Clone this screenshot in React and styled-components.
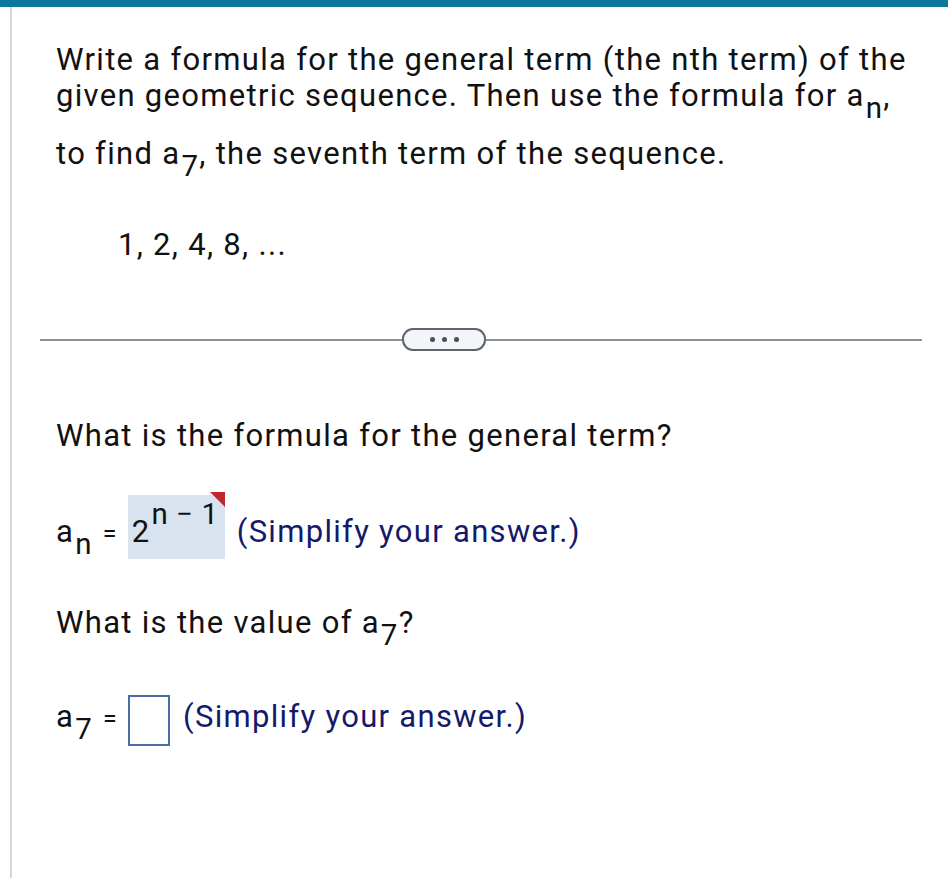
import React from "react";
import styled, { createGlobalStyle } from "styled-components";

const Global = createGlobalStyle`
  html, body { margin: 0; padding: 0; background: #fff; }
  body { font-family: Roboto, "Noto Sans", sans-serif; color: #111; }
`;

const Page = styled.div`
  width: 948px;
  height: 878px;
  display: flex;
  flex-direction: column;
  overflow: hidden;
`;

const TopBar = styled.div`
  height: 7px;
  background: #0b779c;
  flex: none;
`;

const Body = styled.div`
  flex: 1;
  display: flex;
`;

const Rail = styled.div`
  width: 2px;
  margin-left: 10px;
  background: #d2d8df;
  flex: none;
`;

const Content = styled.div`
  flex: 1;
  display: flex;
  flex-direction: column;
  padding: 35px 0 0 28px;
  font-size: 31px;
  letter-spacing: 1.3px;
`;

const Para = styled.p`
  margin: 0;
  line-height: 36px;
  padding-left: ${(p) => p.indent || 16}px;
  margin-top: ${(p) => p.mt || 0}px;
  white-space: nowrap;
`;

const Sub = styled.sub`
  font-size: 0.95em;
  vertical-align: -0.4em;
  line-height: 0;
  margin-left: 1px;
`;

const Sep = styled.div`
  display: flex;
  align-items: center;
  margin-top: 65px;
  margin-right: 26px;
`;

const SepLine = styled.div`
  flex: ${(p) => (p.w ? "none" : 1)};
  width: ${(p) => (p.w ? `${p.w}px` : "auto")};
  height: 2px;
  background: #8b929a;
`;

const Pill = styled.div`
  width: 80px;
  height: 19px;
  border: 2px solid #5d646d;
  border-radius: 11px;
  background: #f3f5f8;
  display: flex;
  align-items: center;
  justify-content: center;
  gap: 7px;
`;

const Dot = styled.span`
  width: 5px;
  height: 5px;
  border-radius: 50%;
  background: #4a4f56;
`;

const Row = styled.div`
  display: flex;
  align-items: baseline;
  padding-left: 16px;
  margin-top: ${(p) => p.mt || 0}px;
  line-height: 36px;
`;

const Var = styled.span`
  display: inline-block;
`;

const Eq = styled.span`
  margin: 0 ${(p) => p.mr || 10}px 0 ${(p) => p.ml || 10}px;
  font-size: 25px;
`;

const Answer = styled.span`
  position: relative;
  display: inline-block;
  background: #d9e2ef;
  height: 36px;
  padding: 19px 6px 9px 4px;
`;

const Corner = styled.span`
  position: absolute;
  top: -3px;
  right: 0;
  width: 0;
  height: 0;
  border-top: 15px solid #c0262c;
  border-left: 15px solid transparent;
`;

const Sup = styled.sup`
  font-size: 0.95em;
  vertical-align: 0.6em;
  line-height: 0;
  margin-left: 1px;
  letter-spacing: 0.6px;
  white-space: pre;
`;

const Hint = styled.span`
  color: #15196b;
  margin-left: ${(p) => p.ml || 12}px;
`;

const EmptyBox = styled.span`
  display: inline-block;
  width: 38px;
  height: 36px;
  padding: 2px 0 9px;
  border: 2px solid #4a6ea6;
  overflow: hidden;
`;

export default function App() {
  return (
    <Page>
      <Global />
      <TopBar />
      <Body>
        <Rail />
        <Content>
          <Para>
            Write a formula for the general term (the nth term) of the
            <br />
            given geometric sequence. Then use the formula for a<Sub>n</Sub>,
          </Para>
          <Para mt={22}>
            to find a<Sub>7</Sub>, the seventh term of the sequence.
          </Para>
          <Para indent={78} mt={55}>1, 2, 4, 8, ...</Para>
          <Sep>
            <SepLine w={362} />
            <Pill>
              <Dot />
              <Dot />
              <Dot />
            </Pill>
            <SepLine />
          </Sep>
          <Para mt={67}>What is the formula for the general term?</Para>
          <Row mt={41}>
            <Var>
              a<Sub>n</Sub>
            </Var>
            <Eq>=</Eq>
            <Answer>
              2<Sup>n − 1</Sup>
              <Corner />
            </Answer>
            <Hint ml={12}>(Simplify your answer.)</Hint>
          </Row>
          <Para mt={46}>
            What is the value of a<Sub>7</Sub>?
          </Para>
          <Row mt={54}>
            <Var>
              a<Sub>7</Sub>
            </Var>
            <Eq>=</Eq>
            <EmptyBox>{"\u00a0"}</EmptyBox>
            <Hint ml={13}>(Simplify your answer.)</Hint>
          </Row>
        </Content>
      </Body>
    </Page>
  );
}
